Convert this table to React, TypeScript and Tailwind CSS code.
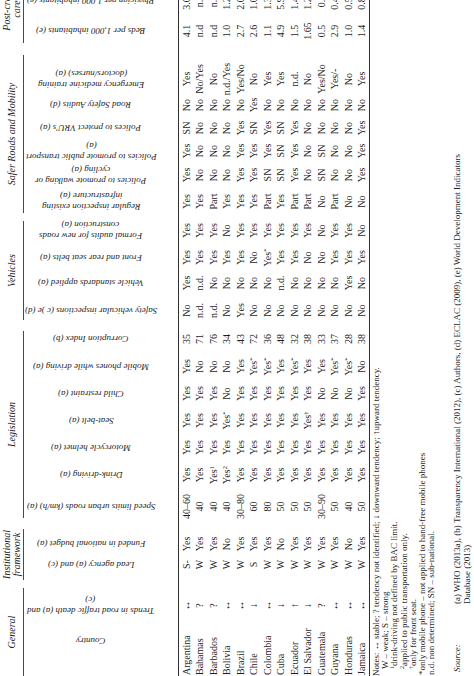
import React from "react";

/**
 * Scanned landscape table, shown turned a quarter turn to the left.
 * The page is laid out in its own (landscape) frame, then rotated.
 */

const COLS =
  "grid grid-cols-[50px_41px_31px_30px_35px_28px_27px_27px_27px_27px_28px_29px_26px_25px_29px_29px_24px_24px_22px_24px_38px_39px_41px]";

const SHIFT = [
  "justify-start pl-[1px]",
  "",
  "pl-[10px]",
  "pr-[10px]",
  "",
  "",
  "",
  "",
  "",
  "",
  "",
  "",
  "",
  "",
  "",
  "",
  "",
  "",
  "",
  "",
  "pr-[10px]",
  "pl-[9px]",
  "pr-[11px]",
];

const GROUPS = [
  { label: ["General"], span: "col-span-2", line: "mr-[3px]" },
  { label: ["Institutional", "framework"], span: "col-span-2", line: "mx-[5px]" },
  { label: ["Legislation"], span: "col-span-7", line: "mx-[6px]" },
  { label: ["Vehicles"], span: "col-span-4", line: "mx-[5px]" },
  { label: ["Safer Roads and Mobility"], span: "col-span-6", line: "ml-[3px]" },
  { label: ["Post-crash", "care"], span: "col-span-2", line: "ml-[12px]" },
];

const HEADERS: string[][] = [
  ["Country"],
  ["Trends in road traffic death (a) and", "(c)"],
  ["Lead agency (a) and (c)"],
  ["Funded in national budget (a)"],
  ["Speed limits urban roads (km/h) (a)"],
  ["Drink-driving (a)"],
  ["Motorcycle helmet (a)"],
  ["Seat-belt (a)"],
  ["Child restraint (a)"],
  ["Mobile phones while driving (a)"],
  ["Corruption Index (b)"],
  ["Safety vehicular inspections (c )e (d)"],
  ["Vehicle standards applied (a)"],
  ["Front and rear seat belts (a)"],
  ["Formal audits for new roads", "construction (a)"],
  ["Regular inspection existing", "infrastructure (a)"],
  ["Policies to promote walking or", "cycling (a)"],
  ["Policies to promote public transport", "(a)"],
  ["Polices to protect VRU's (a)"],
  ["Road Safety Audits (d)"],
  ["Emergency medicine training", "(doctors/nurses) (a)"],
  ["Beds per 1,000 inhabitants (e)"],
  ["Physician per 1,000 inhabitants (e)"],
];

const ROWS: string[][] = [
  ["Argentina", "↔", "S-", "Yes", "40–60", "Yes", "Yes", "Yes", "Yes", "Yes", "35", "No", "Yes", "Yes", "Yes", "Yes", "Yes", "Yes", "SN", "No", "Yes", "4.1", "3.01"],
  ["Bahamas", "?", "W", "Yes", "40", "Yes", "Yes", "Yes", "Yes", "No", "71", "n.d.", "n.d.", "Yes", "Yes", "Yes", "No", "No", "No", "No", "No/Yes", "n.d", "n.d"],
  ["Barbados", "?", "W", "Yes", "40", "Yes^1", "Yes", "Yes", "Yes", "No", "76", "n.d.", "No", "Yes", "Yes", "Part", "No", "No", "No", "No", "No", "n.d", "n.d"],
  ["Bolivia", "↔", "W", "No", "40", "Yes^2", "Yes", "Yes^*", "No", "No", "34", "No", "No", "Yes", "No", "Yes", "No", "No", "No", "No", "n.d./Yes", "1.0", "1.22"],
  ["Brazil", "↔", "W", "Yes", "30–80", "Yes", "Yes", "Yes", "Yes", "Yes", "43", "Yes", "No", "Yes", "Yes", "Yes", "Yes", "Yes", "Yes", "No", "Yes/No", "2.7", "2.06"],
  ["Chile", "↓", "S", "Yes", "60", "Yes", "Yes", "Yes", "Yes", "Yes^*", "72", "No", "No", "No", "Yes", "Yes", "Yes", "Yes", "SN", "Yes", "No", "2.6", "1.09"],
  ["Colombia", "↔", "W", "Yes", "80", "Yes", "Yes", "Yes", "Yes", "Yes^*", "36", "No", "No", "Yes^*", "Yes", "Part", "SN", "Yes", "Yes", "No", "Yes", "1.1", "1.35"],
  ["Cuba", "↓", "W", "No", "50", "Yes", "Yes", "Yes", "Yes", "Yes", "48", "No", "n.d.", "Yes", "Yes", "Yes", "SN", "SN", "SN", "No", "Yes", "4.9", "5.91"],
  ["Ecuador", "↑", "W", "Yes", "50", "Yes", "Yes", "Yes", "Yes", "Yes^*", "32", "No", "No", "Yes", "Yes", "Part", "Yes", "Yes", "Yes", "No", "n.d.", "1.5", "1.48"],
  ["El Salvador", "↓", "W", "Yes", "50", "Yes", "Yes", "Yes^†", "Yes", "Yes", "38", "No", "No", "No", "Yes", "Part", "No", "No", "No", "No", "No", "1.65", "1.24"],
  ["Guatemala", "?", "W", "Yes", "30–90", "Yes", "Yes", "Yes", "No", "Yes", "33", "No", "No", "No", "No", "No", "SN", "SN", "No", "No", "Yes/No", "0.5", "0.9"],
  ["Guyana", "↔", "W", "Yes", "50", "Yes", "Yes", "Yes", "No", "Yes^*", "37", "No", "No", "Yes", "Yes", "Part", "No", "No", "No", "No", "Yes/-", "2.9", "0.48"],
  ["Honduras", "↔", "W", "No", "40", "Yes", "Yes", "Yes", "No", "Yes^*", "28", "No", "Yes", "Yes", "Yes", "No", "No", "No", "No", "No", "No", "1.0", "0.57"],
  ["Jamaica", "↔", "W", "Yes", "50", "Yes", "Yes", "Yes", "Yes", "No", "38", "No", "No", "Yes", "No", "No", "Yes", "Yes", "Yes", "No", "Yes", "1.4", "0.85"],
];

function Value({ text }: { text: string }) {
  const [main, mark] = text.split("^");
  return (
    <span className="whitespace-nowrap">
      {main}
      {mark && <sup className="text-[6.5px]">{mark}</sup>}
    </span>
  );
}

export default function App() {
  return (
    <div className="relative h-[676px] w-[474px] overflow-hidden bg-white">
      <div className="h-[474px] w-[701px] origin-top-left -rotate-90 translate-y-[676px] font-['Liberation_Serif','Times_New_Roman',serif] text-[#1e1e1e]">
        {/* group headings */}
        <div className={COLS}>
          {GROUPS.map((g) => (
            <div key={g.label.join(" ")} className={`${g.span} ${g.line} flex h-[24px] items-center justify-center border-b border-[#4a4a4a]`}>
              <span className="text-center text-[10px] italic leading-[10px] whitespace-nowrap">
                {g.label.map((l, i) => (
                  <span key={i} className="block">
                    {l}
                  </span>
                ))}
              </span>
            </div>
          ))}
        </div>

        {/* column headings */}
        <div className={`${COLS} border-b border-[#2e2e2e]`}>
          {HEADERS.map((h, i) => (
            <div
              key={i}
              className={`flex h-[154px] items-center justify-center pb-[20px] ${i === 0 ? "pl-[20px]" : SHIFT[i]}`}
            >
              <span className="rotate-180 text-center text-[9px] italic leading-[11px] whitespace-nowrap [writing-mode:vertical-rl]">
                {h.map((l, j) => (
                  <React.Fragment key={j}>
                    {j > 0 && <br />}
                    {l}
                  </React.Fragment>
                ))}
              </span>
            </div>
          ))}
        </div>

        {/* body */}
        <div className="border-b border-[#2e2e2e] pt-[1px]">
          {ROWS.map((r) => (
            <div key={r[0]} className={`${COLS} h-[13.5px] items-center text-[10px] leading-none`}>
              {r.map((v, i) => (
                <div key={i} className={`flex justify-center ${SHIFT[i]}`}>
                  <Value text={v} />
                </div>
              ))}
            </div>
          ))}
        </div>

        {/* notes */}
        <div className="pt-[2px] text-[9px] leading-[9.2px] whitespace-nowrap">
          <p>Notes: ↔ stable; ? tendency not identified; ↓ downward tendency; ↑upward tendency.</p>
          <p className="pl-[7px]">W – weak; S – strong</p>
          <p className="pl-[7px]">
            <sup className="text-[6px]">1</sup>drink-driving not defined by BAC limit.
          </p>
          <p className="pl-[7px]">
            <sup className="text-[6px]">2</sup>applied to public transportation only.
          </p>
          <p className="pl-[7px]">
            <sup className="text-[6px]">†</sup>only for front seat.
          </p>
          <p className="pl-[1px]">*only mobile phone – not applied to hand-free mobile phones</p>
          <p className="pl-[1px]">n.d. non determined; SN – sub-national.</p>
          <div className="mt-[17px] flex">
            <span className="w-[72px] pl-[4px] italic">Source:</span>
            <div>
              <p>(a) WHO (2013a), (b) Transparency International (2012), (c) Authors, (d) ECLAC (2009), (e) World Development Indicators</p>
              <p>Database (2013)</p>
            </div>
          </div>
        </div>
      </div>
    </div>
  );
}
